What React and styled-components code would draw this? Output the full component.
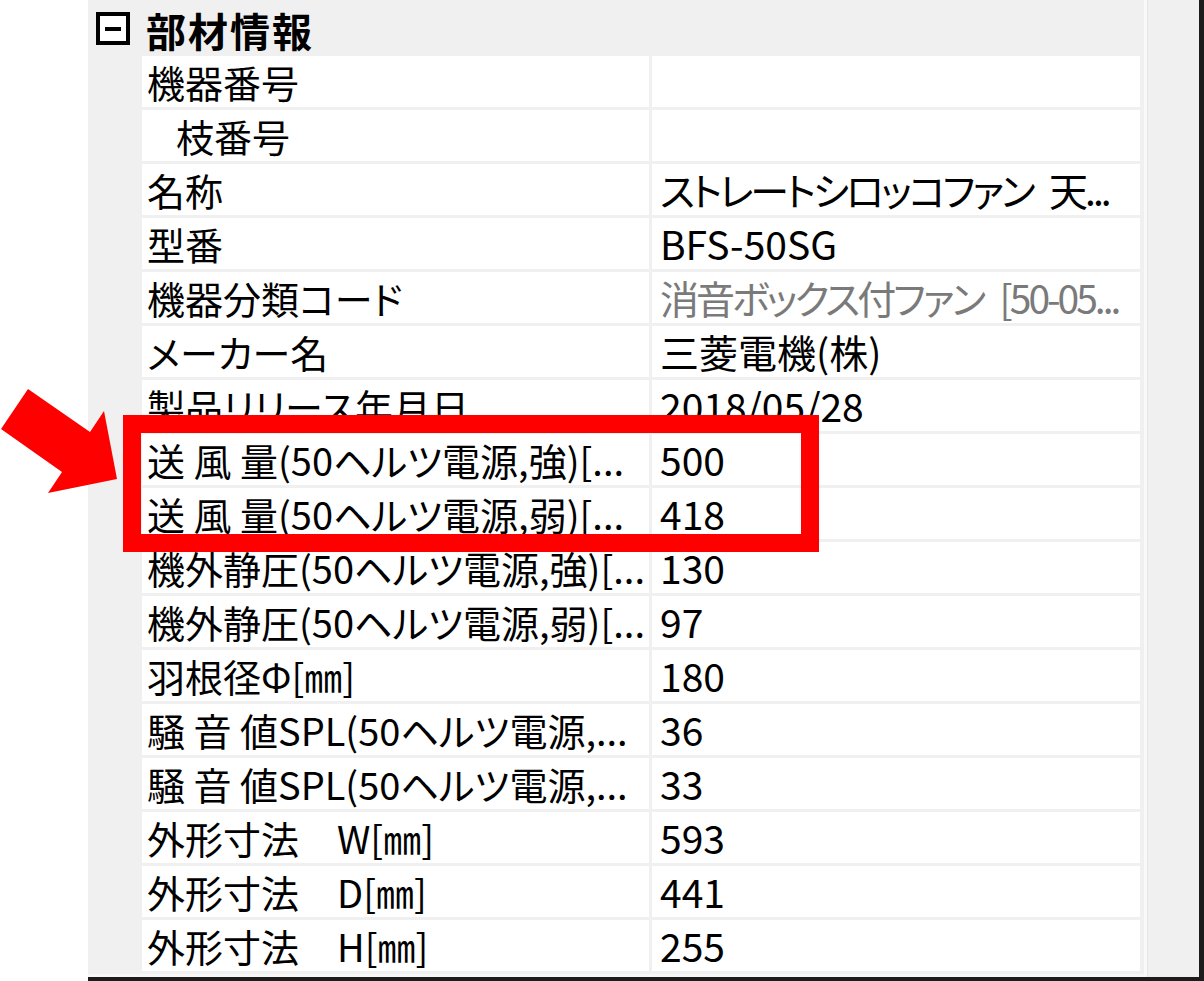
import React from "react";
import styled, { createGlobalStyle } from "styled-components";

const GlobalStyle = createGlobalStyle`
  html, body { margin: 0; padding: 0; background: #ffffff; }
  body {
    font-family: "Noto Sans CJK JP", "Noto Sans", sans-serif;
    color: #000;
  }
`;

const Page = styled.div`
  position: relative;
  width: 1204px;
  height: 981px;
  display: flex;
  overflow: hidden;
  background: #ffffff;
`;

const LeftMargin = styled.div`
  width: 88px;
  flex: none;
  background: #ffffff;
`;

const Panel = styled.div`
  flex: 1;
  display: flex;
  background: #f0f0f0;
  border-right: 5px solid #1c1c1c;
  border-bottom: 4px solid #1c1c1c;
  box-shadow: inset 0 -3px 0 #f7f7f7;
`;

const Grid = styled.div`
  width: 1054px;
  flex: none;
  display: flex;
  flex-direction: column;
  gap: 3px;
`;

const Header = styled.div`
  height: 53px;
  display: flex;
  align-items: center;
`;

const Gutter = styled.div`
  width: 54px;
  flex: none;
  align-self: stretch;
  display: flex;
  align-items: center;
`;

const Expander = styled.div`
  position: relative;
  width: 34px;
  height: 33px;
  margin-left: 8px;
  margin-top: 4px;
  box-sizing: border-box;
  border: 4px solid #000;
  background: #fff;
  &::after {
    content: "";
    position: absolute;
    left: 5px;
    right: 5px;
    top: 50%;
    height: 4px;
    margin-top: -2px;
    background: #000;
  }
`;

const HeaderText = styled.div`
  padding-left: 4px;
  padding-top: 6px;
  font-size: 40px;
  font-weight: 700;
  letter-spacing: 2px;
  line-height: 1.1;
`;

const Row = styled.div`
  height: 51px;
  display: flex;
`;

const Cell = styled.div`
  background: #ffffff;
  display: flex;
  align-items: center;
  box-sizing: border-box;
  white-space: nowrap;
  line-height: 1.25;
  font-feature-settings: "palt";
`;

const LabelCell = styled(Cell)`
  width: 507px;
  font-size: 38px;
  padding-left: ${(p) => (p.$indent ? 34 : 5)}px;
`;

const ValueCell = styled(Cell)`
  width: 488px;
  margin-left: 3px;
  padding-left: 8px;
  font-size: 39px;
  color: ${(p) => (p.$muted ? "#7a7a7a" : "#000")};
  letter-spacing: ${(p) => (p.$condensed ? "-3px" : "0")};
`;

const Scrollbar = styled.div`
  flex: 1;
  margin-left: 2px;
  border-left: 3px solid #f9f9f9;
  box-shadow: inset 1px 0 0 #e6e6e6;
  background: #f0f0f0;
`;

const Highlight = styled.div`
  position: absolute;
  left: 123px;
  top: 415px;
  width: 696px;
  height: 137px;
  box-sizing: border-box;
  border: 18px solid #ff0000;
  pointer-events: none;
`;

const Arrow = styled.svg`
  position: absolute;
  left: 0;
  top: 380px;
  width: 125px;
  height: 120px;
`;

const rows = [
  { label: "機器番号", value: "" },
  { label: "枝番号", value: "", indent: true },
  { label: "名称", value: "ストレートシロッコファン\u2002天...", condensed: true },
  { label: "型番", value: "BFS-50SG" },
  { label: "機器分類コード", value: "消音ボックス付ファン\u2002[50-05...", muted: true, condensed: true },
  { label: "メーカー名", value: "三菱電機(株)" },
  { label: "製品リリース年月日", value: "2018/05/28" },
  { label: "送 風 量(50ヘルツ電源,強)[...", value: "500" },
  { label: "送 風 量(50ヘルツ電源,弱)[...", value: "418" },
  { label: "機外静圧(50ヘルツ電源,強)[...", value: "130" },
  { label: "機外静圧(50ヘルツ電源,弱)[...", value: "97" },
  { label: "羽根径Φ[㎜]", value: "180" },
  { label: "騒 音 値SPL(50ヘルツ電源,...", value: "36" },
  { label: "騒 音 値SPL(50ヘルツ電源,...", value: "33" },
  { label: "外形寸法　W[㎜]", value: "593" },
  { label: "外形寸法　D[㎜]", value: "441" },
  { label: "外形寸法　H[㎜]", value: "255" },
];

export default function App() {
  return (
    <>
      <GlobalStyle />
      <Page>
        <LeftMargin />
        <Panel>
          <Grid>
            <Header>
              <Gutter>
                <Expander />
              </Gutter>
              <HeaderText>部材情報</HeaderText>
            </Header>
            {rows.map((r, i) => (
              <Row key={i}>
                <Gutter />
                <LabelCell $indent={r.indent}>{r.label}</LabelCell>
                <ValueCell $muted={r.muted} $condensed={r.condensed}>
                  {r.value}
                </ValueCell>
              </Row>
            ))}
          </Grid>
          <Scrollbar />
        </Panel>
        <Highlight />
        <Arrow viewBox="0 380 125 120">
          <polygon
            points="28,389 90,432 104,411 117,479 48,493 62,472 1,429"
            fill="#ff0000"
          />
        </Arrow>
      </Page>
    </>
  );
}
